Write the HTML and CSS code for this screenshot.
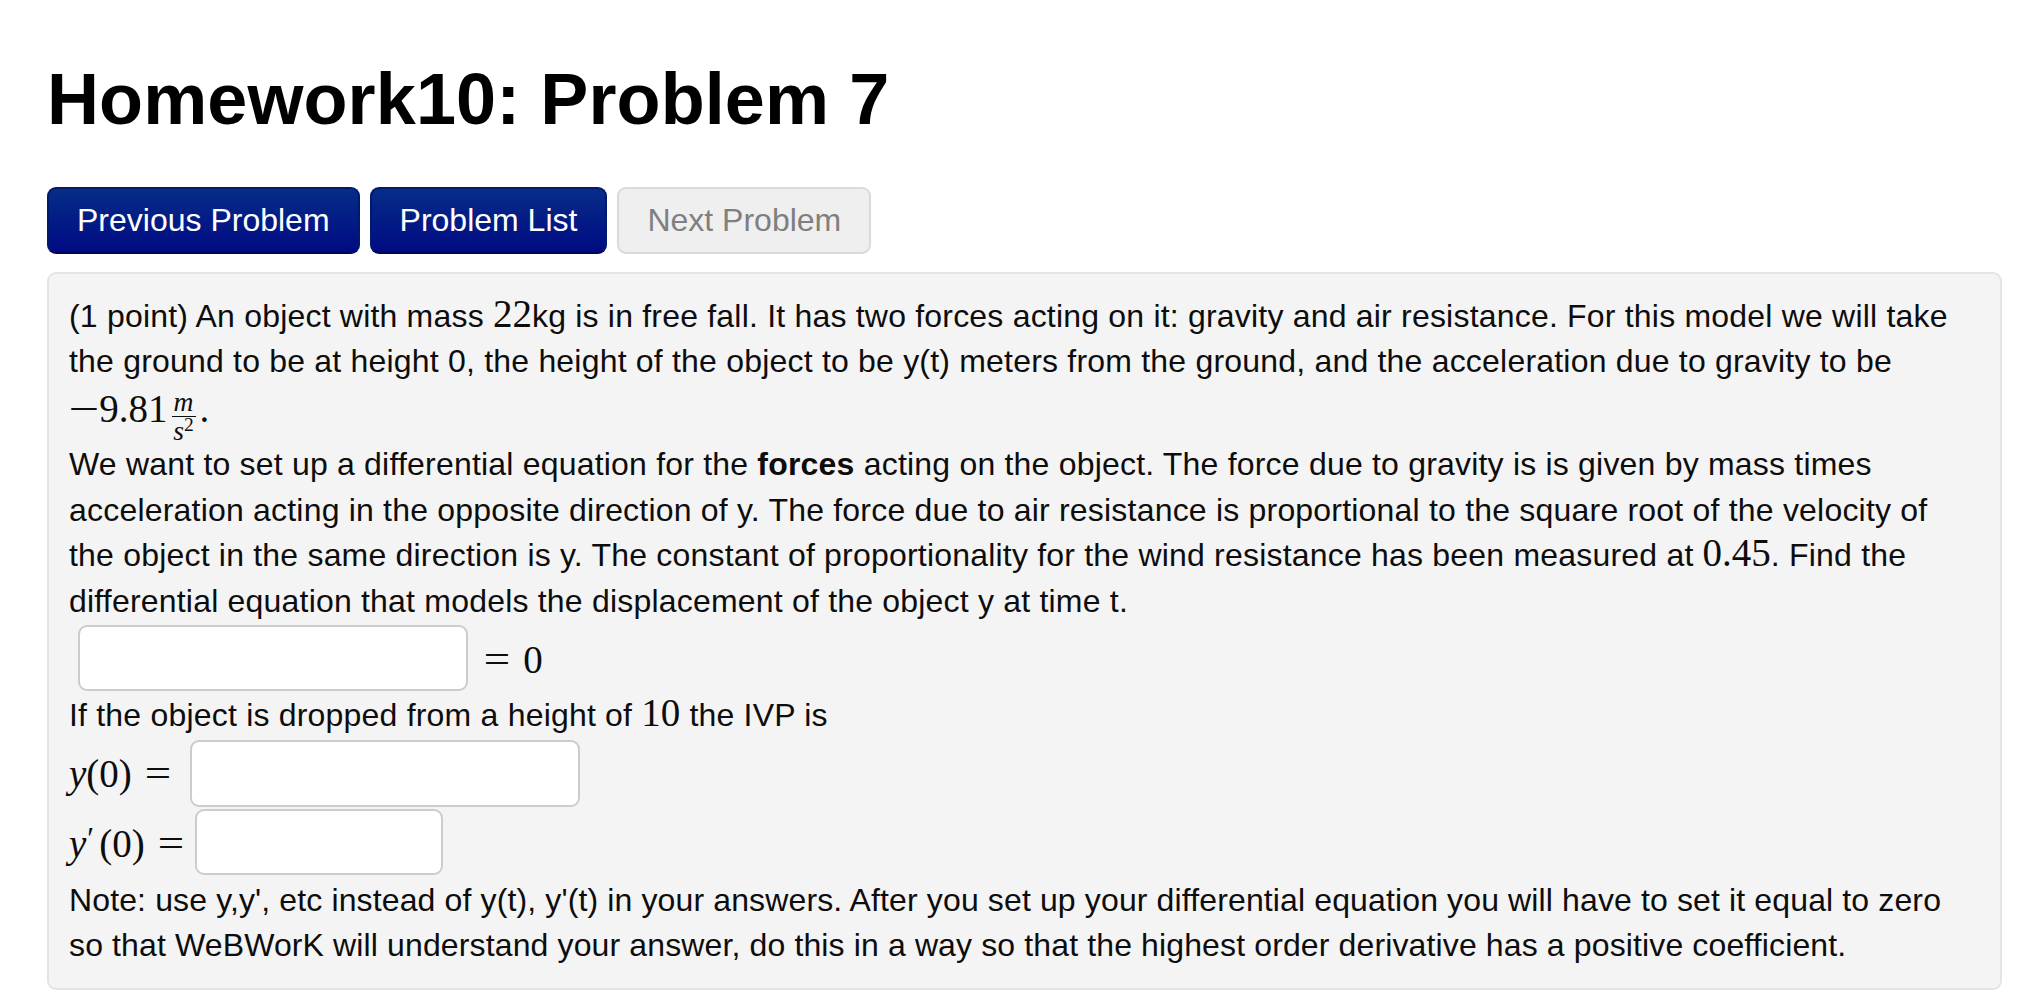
FILE: index.html
```html
<!DOCTYPE html>
<html lang="en">
<head>
<meta charset="utf-8">
<title>Homework10: Problem 7</title>
<link rel="stylesheet" href="styles.css">
</head>
<body>
<div class="page">
  <h1 class="title">Homework10: Problem 7</h1>
  <div class="nav">
    <a class="btn btn-primary">Previous Problem</a>
    <a class="btn btn-primary">Problem List</a>
    <a class="btn btn-disabled">Next Problem</a>
  </div>
  <div class="problem">
    <div class="text">(1 point) An object with mass <span class="m">22</span>kg is in free fall. It has two forces acting on it: gravity and air resistance. For this model we will take<br>the ground to be at height 0, the height of the object to be y(t) meters from the ground, and the acceleration due to gravity to be</div>
    <div class="frac-line"><span class="m"><span class="minus"><span class="glyph">−</span></span>9.81</span><span class="frac"><span class="num">m</span><span class="den">s<sup>2</sup></span></span><span class="m dot">.</span></div>
    <div class="text">We want to set up a differential equation for the <b>forces</b> acting on the object. The force due to gravity is is given by mass times<br>acceleration acting in the opposite direction of y. The force due to air resistance is proportional to the square root of the velocity of<br>the object in the same direction is y. The constant of proportionality for the wind resistance has been measured at <span class="m">0.45</span>. Find the<br>differential equation that models the displacement of the object y at time t.</div>
    <div class="ans-row row-eq"><span class="input w390"></span><span class="m eq"><span class="op"><span class="glyph">=</span></span>0</span></div>
    <div class="text">If the object is dropped from a height of <span class="m">10</span> the IVP is</div>
    <div class="ans-row row-y0"><span class="m lbl"><i>y</i>(0)<span class="op sp"><span class="glyph">=</span></span></span><span class="input w390"></span></div>
    <div class="ans-row row-y1"><span class="m lbl"><i>y</i><span class="prime">′</span>(0)<span class="op sp"><span class="glyph">=</span></span></span><span class="input w248"></span></div>
    <div class="text note">Note: use y,y', etc instead of y(t), y'(t) in your answers. After you set up your differential equation you will have to set it equal to zero<br>so that WeBWorK will understand your answer, do this in a way so that the highest order derivative has a positive coefficient.</div>
  </div>
</div>
</body>
</html>
```
FILE: styles.css
```css
html, body {
  margin: 0;
  padding: 0;
  background: #ffffff;
}

.page {
  padding: 0 32px 0 47px;
  font-family: "Liberation Sans", Arial, sans-serif;
  color: #0d0d0d;
}

.title {
  margin: 54px 0 0;
  font-size: 72px;
  line-height: 91px;
  font-weight: 700;
  color: #000000;
  letter-spacing: 0.1px;
}

.nav {
  display: flex;
  gap: 10px;
  margin-top: 42px;
}

.btn {
  display: inline-block;
  font-size: 32px;
  line-height: 45px;
  padding: 9px 28px;
  border: 2px solid transparent;
  border-radius: 9px;
  text-decoration: none;
  white-space: nowrap;
}

.btn-primary {
  color: #ffffff;
  background: linear-gradient(#062d88, #000a83);
  border-color: #001a6e #001a6e #00065c;
}

.btn-disabled {
  color: #7f7f7f;
  background: #efefef;
  border-color: #dadada;
}

.problem {
  margin-top: 18px;
  background: #f4f4f4;
  border: 2px solid #e4e4e4;
  border-radius: 9px;
  padding: 19.5px 20px 19px 20px;
  font-size: 32px;
  line-height: 45.4px;
  color: #0d0d0d;
}

.text {
  white-space: nowrap;
  letter-spacing: 0.2px;
}

.text.note {
  letter-spacing: 0.13px;
}

.m {
  font-family: "Liberation Serif", "Times New Roman", serif;
  font-size: 39px;
  line-height: 1;
  letter-spacing: 0;
}

.minus {
  display: inline-block;
  width: 0.778em;
  text-align: center;
}

.glyph {
  display: inline-block;
}

.minus .glyph {
  transform: scaleX(1.4);
}

.op {
  display: inline-block;
  width: 0.778em;
  text-align: center;
  margin-right: 0.278em;
}

.op .glyph {
  transform: scaleX(1.2);
}

.op.sp {
  margin-left: 0.278em;
}

.frac-line {
  display: flex;
  align-items: center;
  height: 58px;
  padding-bottom: 10px;
  box-sizing: border-box;
}

.frac {
  display: inline-flex;
  flex-direction: column;
  align-items: center;
  font-family: "Liberation Serif", "Times New Roman", serif;
  font-style: italic;
  font-size: 27.6px;
  line-height: 21px;
  margin-left: 3px;
  margin-top: 16px;
  padding: 0 1px;
}

.frac .num {
  border-bottom: 1.5px solid #0d0d0d;
  padding: 0 2px 4px;
}

.frac .den {
  padding-top: 3px;
}

.frac sup {
  font-style: normal;
  font-size: 19.5px;
  vertical-align: 9px;
  line-height: 0;
}

.dot {
  margin-left: 3px;
}

.ans-row {
  display: flex;
  align-items: center;
}

.row-eq {
  height: 69.5px;
  align-items: flex-start;
}

.row-eq .input {
  margin-left: 9px;
  margin-top: 1.5px;
}

.row-eq .eq {
  align-self: center;
  margin-top: 2px;
}

.row-y0 {
  height: 69px;
}

.row-y0 .input {
  height: 67px;
  margin-left: 6px;
}

.row-y1 {
  height: 70px;
}

.row-y1 .input {
  margin-left: -2px;
  margin-bottom: 2px;
}

.input {
  display: block;
  height: 66px;
  box-sizing: border-box;
  background: #ffffff;
  border: 2px solid #cccccc;
  border-radius: 9px;
}

.w390 {
  width: 390px;
}

.w248 {
  width: 248px;
}

.eq {
  margin-left: 14px;
}

.lbl {
  white-space: nowrap;
}

.lbl i {
  font-style: italic;
}

.prime {
  display: inline-block;
  font-size: 0.8em;
  vertical-align: 0.25em;
  margin: 0 5px 0 1px;
}
```
